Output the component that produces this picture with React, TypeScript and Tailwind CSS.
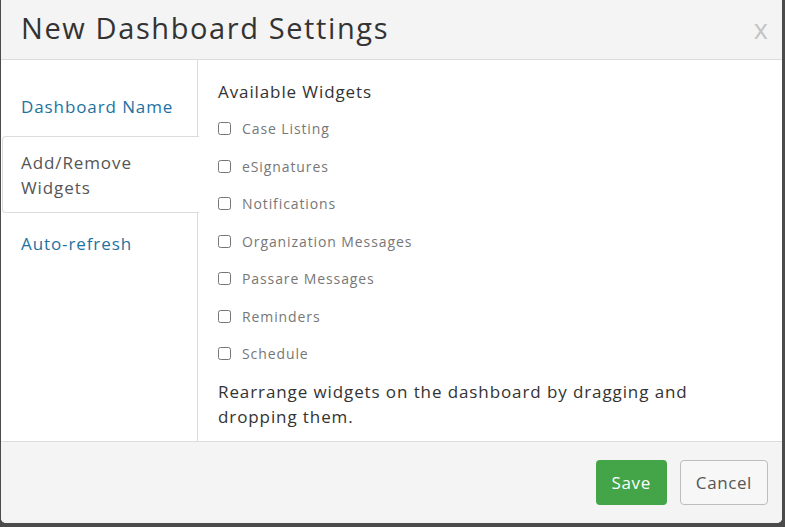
import { useState } from "react";

const tabs = ["Dashboard Name", "Add/Remove Widgets", "Auto-refresh"];

const widgets = [
  "Case Listing",
  "eSignatures",
  "Notifications",
  "Organization Messages",
  "Passare Messages",
  "Reminders",
  "Schedule",
];

const App = () => {
  const [active, setActive] = useState(1);
  const [checked, setChecked] = useState<string[]>([]);

  const toggle = (name: string) =>
    setChecked((prev) =>
      prev.includes(name) ? prev.filter((n) => n !== name) : [...prev, name]
    );

  return (
    <div
      className="w-[785px] h-[527px] bg-[#4b4b4b] overflow-hidden pl-[1px] pb-[4px]"
      style={{ fontFamily: '"Open Sans", "Liberation Sans", sans-serif' }}>
      <div className="w-[781px] h-[523px] bg-white rounded-b-[5px] flex flex-col overflow-hidden">
        <div className="h-[60px] shrink-0 bg-[#f4f4f4] border-b border-[#dcdcdc] flex items-center justify-between pl-[20px] pr-[14px]">
          <h2 className="text-[29px] text-[#333] leading-none tracking-[1.6px] mt-[-4px]">
            New Dashboard Settings
          </h2>
          <button className="text-[27px] text-[#c4c4c4] leading-none mt-[-3px]">
            x
          </button>
        </div>

        <div className="flex h-[381px] shrink-0 tracking-[0.9px]">
          <div className="w-[197px] shrink-0 border-r border-[#dcdcdc] pt-[16px] flex flex-col">
            {tabs.map((tab, i) => (
              <button
                key={tab}
                onClick={() => setActive(i)}
                className={`flex items-center text-left text-[17px] leading-[25px] pr-[10px] ${
                  i === active
                    ? "text-[#555] bg-white border border-r-0 border-[#dcdcdc] rounded-l-[4px] h-[77px] mr-[-1px] ml-[1px] w-[197px] pl-[18px]"
                    : "text-[#1e72a0] h-[60px] pt-[1px] pl-[20px]"
                }`}>
                {tab}
              </button>
            ))}
          </div>

          <div className="flex-1 pl-[20px] pt-[19px]">
            <h3 className="text-[17px] text-[#333] leading-[25px]">
              Available Widgets
            </h3>
            <div className="flex flex-col mt-[6px]">
              {widgets.map((w) => (
                <label
                  key={w}
                  className="flex items-center gap-[11px] h-[37.5px] text-[14px] text-[#777] cursor-pointer">
                  <input
                    type="checkbox"
                    checked={checked.includes(w)}
                    onChange={() => toggle(w)}
                    className="w-[13px] h-[13px] m-0 accent-[#43a047]"
                  />
                  {w}
                </label>
              ))}
            </div>
            <p className="text-[17px] text-[#333] leading-[25px] mt-[6px] max-w-[520px]">
              Rearrange widgets on the dashboard by dragging and dropping them.
            </p>
          </div>
        </div>

        <div className="flex-1 bg-[#f4f4f4] border-t border-[#dcdcdc] flex items-start justify-end gap-[13px] pt-[18px] pr-[14px] tracking-[0.6px]">
          <button className="h-[45px] px-[16px] bg-[#43a547] text-white text-[17px] rounded-[4px]">
            Save
          </button>
          <button className="h-[45px] px-[15px] bg-[#f7f7f7] border border-[#bdbdbd] text-[#555] text-[17px] rounded-[4px]">
            Cancel
          </button>
        </div>
      </div>
    </div>
  );
};

export default App;
